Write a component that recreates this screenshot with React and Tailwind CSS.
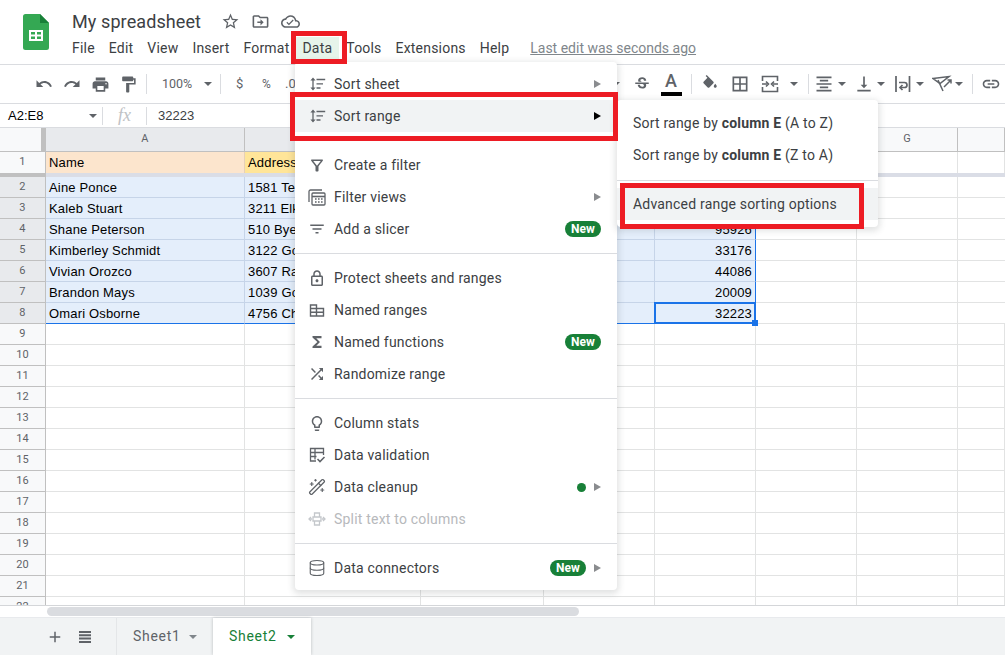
import { Database, WandSparkles } from 'lucide-react'

const ROBOTO = "font-['Roboto',sans-serif]"
const ARIAL = "font-['Liberation_Sans',Arial,sans-serif]"

function Mi({ d, size = 18, className = 'text-[#5f6368]' }) {
  return (
    <svg width={size} height={size} viewBox="0 0 24 24" fill="currentColor" className={className}>
      <path d={d} />
    </svg>
  )
}

function Caret({ className = 'text-[#5f6368]' }) {
  return (
    <svg width="8" height="4" viewBox="0 0 8 4" fill="currentColor" className={className}>
      <polygon points="0,0 8,0 4,4" />
    </svg>
  )
}

function Arrow({ dark }) {
  return (
    <svg width="7" height="8" viewBox="0 0 7 8" fill="currentColor" className={dark ? 'text-black' : 'text-[#8a8c8f]'}>
      <polygon points="0,0 7,4 0,8" />
    </svg>
  )
}

function SortIcon() {
  return (
    <svg width="18" height="18" viewBox="0 0 18 18" fill="none" stroke="#5f6368" strokeWidth="1.3">
      <path d="M5 4v10" />
      <path d="M2.4 5.500 5 2.500l2.600 3zM2.400 12.500 5 15.500l2.600-3z" fill="#5f6368" stroke="none" />
      <path d="M8.500 4.500h8.700M8.500 8.800h6.500M8.500 13h4" />
    </svg>
  )
}

function FilterViewsIcon() {
  return (
    <svg width="18" height="18" viewBox="0 0 18 18" fill="none" stroke="#5f6368" strokeWidth="1.3">
      <path d="M1 14V3.5C1 2.7 1.7 2 2.5 2H14" />
      <rect x="4" y="5" width="13" height="12" rx="1" />
      <path d="M4 8.5h13" strokeWidth="1.6" />
      <path d="M7 11h1.6M10 11h1.6M13 11h1.6M7 14h1.6M10 14h1.6M13 14h1.6" strokeWidth="1.6" />
    </svg>
  )
}

function NamedRangesIcon() {
  return (
    <svg width="18" height="18" viewBox="0 0 18 18" fill="none" stroke="#5f6368" strokeWidth="1.4">
      <path d="M2.5 15V4h6v3.5h7V15z" />
      <path d="M2.5 7.5h6M2.5 11.2h13M8.5 7.5V15" />
    </svg>
  )
}

function ValidationIcon() {
  return (
    <svg width="18" height="18" viewBox="0 0 18 18" fill="none" stroke="#5f6368" strokeWidth="1.3">
      <path d="M8 15H2.5V2.5h13V9" />
      <path d="M2.5 6.5h13M2.5 10.5h6M7 2.5v11" />
      <path d="m9.5 13 2.5 2.6 4.5-4.6" strokeWidth="1.5" />
    </svg>
  )
}

function SplitIcon() {
  return (
    <svg width="18" height="18" viewBox="0 0 18 18" fill="none" stroke="#c4c7cb" strokeWidth="1.3">
      <path d="M6.5 3h5v4h-5zM6.5 11h5v4h-5zM5 7h8v4H5z" />
      <path d="M1 9h3M14 9h3" />
      <path d="M3 7 1 9l2 2M15 7l2 2-2 2" />
    </svg>
  )
}

function MergeIcon() {
  return (
    <svg width="18" height="18" viewBox="0 0 18 18" fill="none" stroke="#5f6368" strokeWidth="1.6">
      <path d="M1.5 6V1.5h15V6M1.5 12v4.500h15V12" />
      <path d="M1 9h5.500M11.500 9H17" />
      <path d="m5 6.500 2.500 2.500L5 11.500M13 6.500 10.500 9l2.500 2.500" />
    </svg>
  )
}

function WrapIcon() {
  return (
    <svg width="18" height="18" viewBox="0 0 18 18" fill="none" stroke="#5f6368" strokeWidth="1.7">
      <path d="M2 1v16M15.500 1v16" />
      <path d="M5 7.500h5.500a2.500 2.500 0 0 1 0 5H7" />
      <path d="M8.500 10 6 12.500 8.500 15" />
    </svg>
  )
}

function RotateIcon() {
  return (
    <svg width="20" height="18" viewBox="0 0 20 18" fill="none" stroke="#5f6368" strokeWidth="1.5">
      <path d="M1 3.500 17 1.500 8 8.500z" />
      <path d="m6 5 5 11" />
      <path d="M12 12 19 5M15.500 5H19v3.500" />
    </svg>
  )
}

const P = {
  undo: 'M12.5 8c-2.65 0-5.05.99-6.9 2.6L2 7v9h9l-3.62-3.62c1.39-1.16 3.16-1.88 5.12-1.88 3.54 0 6.55 2.31 7.6 5.5l2.37-.78C21.08 11.03 17.15 8 12.5 8z',
  redo: 'M18.4 10.6C16.55 8.99 14.15 8 11.5 8c-4.65 0-8.58 3.03-9.96 7.22L3.9 16c1.05-3.19 4.05-5.5 7.6-5.5 1.95 0 3.73.72 5.12 1.88L13 16h9V7l-3.6 3.6z',
  print: 'M19 8H5c-1.66 0-3 1.34-3 3v6h4v4h12v-4h4v-6c0-1.66-1.34-3-3-3zm-3 11H8v-5h8v5zm3-7c-.55 0-1-.45-1-1s.45-1 1-1 1 .45 1 1-.45 1-1 1zm-1-9H6v4h12V3z',
  paint: 'M18 4V3c0-.55-.45-1-1-1H5c-.55 0-1 .45-1 1v4c0 .55.45 1 1 1h12c.55 0 1-.45 1-1V6h1v4H9v11c0 .55.45 1 1 1h2c.55 0 1-.45 1-1v-9h8V4h-3z',
  star: 'M22 9.24l-7.19-.62L12 2 9.19 8.63 2 9.24l5.46 4.73L5.82 21 12 17.27 18.18 21l-1.63-7.03L22 9.24zM12 15.4l-3.76 2.27 1-4.28-3.32-2.88 4.38-.38L12 6.1l1.71 4.04 4.38.38-3.32 2.88 1 4.28L12 15.4z',
  move: 'M20 6h-8l-2-2H4c-1.1 0-2 .9-2 2v12c0 1.1.9 2 2 2h16c1.1 0 2-.9 2-2V8c0-1.1-.9-2-2-2zm0 12H4V6h5.17l2 2H20v10zm-8-4H8v-2h4V9l4 4-4 4v-3z',
  cloud: 'M19.35 10.04C18.67 6.59 15.64 4 12 4 9.11 4 6.6 5.64 5.35 8.04 2.34 8.36 0 10.91 0 14c0 3.31 2.69 6 6 6h13c2.76 0 5-2.24 5-5 0-2.64-2.05-4.78-4.65-4.96zM19 18H6c-2.21 0-4-1.79-4-4 0-2.05 1.53-3.76 3.56-3.97l1.07-.11.5-.95C8.08 7.14 9.94 6 12 6c2.62 0 4.88 1.86 5.39 4.43l.3 1.5 1.53.11c1.56.1 2.78 1.41 2.78 2.96 0 1.65-1.35 3-3 3zm-9-3.500-2.100-2.100-1.100 1.100 3.200 3.200 6-6-1.100-1.100z',
  strike: 'M6.85 7.08C6.85 4.37 9.45 3 12.24 3c1.64 0 3 .49 3.9 1.28.77.65 1.46 1.73 1.46 3.24h-3.01c0-.31-.05-.59-.15-.85-.29-.86-1.2-1.28-2.25-1.28-1.86 0-2.34 1.02-2.34 1.7 0 .48.25.88.74 1.21.38.25.77.48 1.41.7H7.39c-.21-.34-.54-.89-.54-1.92zM21 12v-2H3v2h9.62c1.15.45 1.96.75 1.96 1.97 0 1-.81 1.67-2.28 1.67-1.54 0-2.93-.54-2.93-2.51H6.4c0 .55.08 1.13.24 1.58.81 2.29 3.29 3.3 5.67 3.3 2.27 0 5.3-.89 5.3-4.05 0-.3-.01-1.16-.48-1.94H21V12z',
  fill: 'M16.56 8.94 7.62 0 6.21 1.41l2.38 2.38-5.15 5.15c-.59.59-.59 1.54 0 2.12l5.5 5.5c.29.29.68.44 1.06.44s.77-.15 1.06-.44l5.5-5.5c.59-.58.59-1.53 0-2.12zM19 11.5s-2 2.17-2 3.5c0 1.1.9 2 2 2s2-.9 2-2c0-1.33-2-3.5-2-3.5z',
  border: 'M3 3v18h18V3H3zm8 16H5v-6h6v6zm0-8H5V5h6v6zm8 8h-6v-6h6v6zm0-8h-6V5h6v6z',
  align: 'M3 21h18v-2H3v2zm4-4h10v-2H7v2zm-4-4h18v-2H3v2zm4-4h10V7H7v2zM3 3v2h18V3H3z',
  valign: 'M16 13h-3V3h-2v10H8l4 4 4-4zM4 19v2h16v-2H4z',
  link: 'M3.9 12c0-1.71 1.39-3.1 3.1-3.1h4V7H7c-2.76 0-5 2.24-5 5s2.24 5 5 5h4v-1.9H7c-1.71 0-3.1-1.39-3.1-3.1zM8 13h8v-2H8v2zm9-6h-4v1.9h4c1.71 0 3.1 1.39 3.1 3.1s-1.39 3.1-3.1 3.1h-4V17h4c2.76 0 5-2.24 5-5s-2.24-5-5-5z',
  funnel: 'M7 6h10l-5.01 6.3L7 6zm-2.75-.39C6.27 8.2 10 13 10 13v6c0 .55.45 1 1 1h2c.55 0 1-.45 1-1v-6s3.72-4.800 5.740-7.390c.51-.66.04-1.610-.79-1.610H5.040c-.83 0-1.300.950-.790 1.610z',
  slicer: 'M10 18h4v-2h-4v2zM3 6v2h18V6H3zm3 7h12v-2H6v2z',
  lock: 'M18 8h-1V6c0-2.76-2.24-5-5-5S7 3.24 7 6v2H6c-1.1 0-2 .9-2 2v10c0 1.1.9 2 2 2h12c1.1 0 2-.9 2-2V10c0-1.1-.9-2-2-2zM9 6c0-1.66 1.34-3 3-3s3 1.34 3 3v2H9V6zm9 14H6V10h12v10zm-6-3c1.1 0 2-.9 2-2s-.9-2-2-2-2 .9-2 2 .9 2 2 2z',
  sigma: 'M18 4H6v2l6.5 6L6 18v2h12v-3h-7l5-5-5-5h7z',
  shuffle: 'M10.59 9.17 5.41 4 4 5.41l5.17 5.17 1.42-1.41zM14.5 4l2.04 2.04L4 18.59 5.41 20 17.96 7.46 20 9.5V4h-5.5zm.33 9.41-1.41 1.41 3.13 3.13L14.5 20H20v-5.5l-2.04 2.04-3.13-3.13z',
  bulb: 'M9 21c0 .55.45 1 1 1h4c.55 0 1-.45 1-1v-1H9v1zm3-19C8.14 2 5 5.14 5 9c0 2.38 1.19 4.47 3 5.74V17c0 .55.45 1 1 1h6c.55 0 1-.45 1-1v-2.26c1.81-1.27 3-3.36 3-5.74 0-3.86-3.14-7-7-7zm2.85 11.1-.85.6V16h-4v-2.3l-.85-.6C7.8 12.16 7 10.63 7 9c0-2.76 2.24-5 5-5s5 2.24 5 5c0 1.63-.8 3.16-2.15 4.1z',
}

function Logo() {
  return (
    <svg width="26" height="36" viewBox="0 0 26 36">
      <path d="M2.500 0H17l9 9v24.500a2.500 2.500 0 0 1-2.500 2.500h-21A2.500 2.500 0 0 1 0 33.500v-31A2.500 2.500 0 0 1 2.500 0z" fill="#34a853" />
      <path d="M17 0l9 9h-9z" fill="#188038" />
      <path d="M6 16h14v11H6z" fill="#fff" />
      <path d="M8 18h4v2.500H8zM14 18h4v2.500h-4zM8 22.500h4V25H8zM14 22.500h4V25h-4z" fill="#34a853" />
    </svg>
  )
}

function Sep() {
  return <div className="w-px h-5 bg-[#dadce0] shrink-0" />
}

const MENUS = ['File', 'Edit', 'View', 'Insert', 'Format', 'Data', 'Tools', 'Extensions', 'Help']

function Header() {
  return (
    <div className={`h-[65px] shrink-0 flex border-b border-[#dadce0] ${ROBOTO}`}>
      <div className="w-[65px] pl-[23px] pt-[14px] shrink-0">
        <Logo />
      </div>
      <div className="flex flex-col">
        <div className="flex items-center h-[24px] mt-[9px] pl-[7px]">
          <span className="text-[18px] text-[#3c4043] w-[149px] tracking-[0.1px]">My spreadsheet</span>
          <div className="flex items-center gap-[11px]">
            <Mi d={P.star} size={19} />
            <Mi d={P.move} size={19} />
            <Mi d={P.cloud} size={19} />
          </div>
        </div>
        <div className="flex items-center h-[22px] mt-[4px] text-[14px] tracking-[0.2px] text-[#3c4043]">
          {MENUS.map((m) => (
            <span key={m} className={m === 'Data' ? '-ml-px px-[7px] bg-[#e6f4ea] h-[22px] flex items-center' : 'px-[7px]'}>
              {m}
            </span>
          ))}
          <span className="ml-[14px] text-[#80868b] underline tracking-normal">Last edit was seconds ago</span>
        </div>
      </div>
    </div>
  )
}

function Tool({ children, className = 'w-7' }) {
  return <div className={`h-full flex items-center justify-center shrink-0 ${className}`}>{children}</div>
}

function Toolbar() {
  return (
    <div className={`h-[39px] shrink-0 flex items-center border-b border-[#dadce0] text-[#5f6368] ${ROBOTO}`}>
      <div className="w-[30px] shrink-0" />
      <Tool><Mi d={P.undo} /></Tool>
      <Tool><Mi d={P.redo} /></Tool>
      <Tool><Mi d={P.print} size={19} /></Tool>
      <Tool><Mi d={P.paint} size={19} /></Tool>
      <div className="w-1 shrink-0" />
      <Sep />
      <span className="ml-[15px] w-[42px] text-[12.500px] shrink-0">100%</span>
      <Caret />
      <div className="ml-[8px]"><Sep /></div>
      <span className="ml-[15px] w-[26px] text-[13px] shrink-0">$</span>
      <span className="w-[23px] text-[12px] shrink-0">%</span>
      <span className="text-[13px] shrink-0">.0</span>
      <div className="ml-auto h-full flex items-center pl-1 w-[399px] shrink-0">
        <Tool className="w-[18px] justify-start pl-[2px]"><Caret /></Tool>
        <Tool><Mi d={P.strike} /></Tool>
        <div className="w-[30px] h-full shrink-0 flex flex-col items-center pt-[6px]">
          <span className="text-[18px] leading-[20px] font-medium text-[#5f6368]">A</span>
          <div className="w-[21px] h-[4px] bg-black mt-px" />
        </div>
        <div className="ml-[5px]"><Sep /></div>
        <Tool className="w-9"><Mi d={P.fill} /></Tool>
        <Tool className="w-6"><Mi d={P.border} size={20} /></Tool>
        <Tool className="w-9"><MergeIcon /></Tool>
        <Tool className="w-3"><Caret /></Tool>
        <div className="ml-2"><Sep /></div>
        <Tool className="w-6 ml-[3px]"><Mi d={P.align} size={20} /></Tool>
        <Tool className="w-2.5 ml-px"><Caret /></Tool>
        <Tool className="w-6 ml-[5px]"><Mi d={P.valign} size={20} /></Tool>
        <Tool className="w-2.5"><Caret /></Tool>
        <Tool className="w-6 ml-[5px]"><WrapIcon /></Tool>
        <Tool className="w-2.5"><Caret /></Tool>
        <Tool className="w-6 ml-[5px]"><RotateIcon /></Tool>
        <Tool className="w-2.5"><Caret /></Tool>
        <div className="ml-2"><Sep /></div>
        <Tool className="w-6 ml-1.5"><Mi d={P.link} size={20} /></Tool>
      </div>
    </div>
  )
}

function FormulaBar() {
  return (
    <div className={`h-6 shrink-0 flex items-center border-b border-[#dadce0] text-[13px] text-black ${ARIAL}`}>
      <span className="pl-2 w-[89px] shrink-0">A2:E8</span>
      <Caret />
      <div className="ml-[5px] w-px h-[18px] bg-[#dadce0]" />
      <span className="w-[43px] text-center text-[18px] italic text-[#c0c2c5] font-['Liberation_Serif',serif]">fx</span>
      <div className="w-px h-[18px] bg-[#dadce0]" />
      <span className="pl-[11px] text-[#3c4043]">32223</span>
    </div>
  )
}

const COLS = ['A', 'B', 'C', 'D', 'E', 'F', 'G', '']

const ROWS = [
  ['Aine Ponce', '1581 Terry Lane', '', '', '61093'],
  ['Kaleb Stuart', '3211 Elk Street', '', '', '27410'],
  ['Shane Peterson', '510 Byers Lane', '', '', '95926'],
  ['Kimberley Schmidt', '3122 Golden Ridge', '', '', '33176'],
  ['Vivian Orozco', '3607 Raccoon Run', '', '', '44086'],
  ['Brandon Mays', '1039 Godfrey Road', '', '', '20009'],
  ['Omari Osborne', '4756 Charter Street', '', '', '32223'],
]

const GRID_COLS = 'grid grid-cols-[46px_199px_176px_123px_111px_101px_101px_101px_1fr]'

function Sheet() {
  const emptyRows = []
  for (let r = 9; r <= 22; r++) emptyRows.push(r)
  return (
    <div className={`flex-1 min-h-0 overflow-hidden border-b border-[#d4d6d9] ${ARIAL}`}>
      <div className={`${GRID_COLS} grid-rows-[24px_21px_4px] text-[13px] tracking-[0.17px] text-black`}>
        {/* column headers */}
        <div className="bg-[#f8f9fa] border-r-[5px] border-r-[#c0c0c0] border-b border-b-[#c0c0c0]" />
        {COLS.map((c, i) => (
          <div
            key={i}
            className={`flex items-center justify-center text-[11px] text-[#5f6368] border-r border-b border-[#c0c0c0] ${ROBOTO} ${i < 5 ? 'bg-[#e8eaed]' : 'bg-[#f8f9fa]'}`}
          >
            {c}
          </div>
        ))}

        {/* frozen row */}
        <div className={`flex items-center justify-center text-[11px] text-[#5f6368] bg-[#f8f9fa] border-r border-[#c0c0c0] ${ROBOTO}`}>1</div>
        <div className="pl-[3px] flex items-center bg-[#fce5cd] border-r border-[#e6d0b8]">Name</div>
        <div className="pl-[3px] flex items-center bg-[#ffe599] border-r border-[#e6d08c] overflow-hidden">Address</div>
        {[3, 4, 5, 6, 7, 8].map((k) => (
          <div key={k} className="border-r border-[#e2e3e3]" />
        ))}

        <div className="bg-[#c0c0c0]" />
        <div className="col-span-8 bg-[#dadde6]" />
      </div>

      <div className={`${GRID_COLS} auto-rows-[21px] text-[13px] tracking-[0.17px] text-black`}>
        {ROWS.map((row, r) => (
          <SelectedRow key={r} n={r + 2} row={row} last={r === ROWS.length - 1} />
        ))}
        {emptyRows.map((n) => (
          <EmptyRow key={n} n={n} />
        ))}
      </div>
    </div>
  )
}

function SelectedRow({ n, row, last }) {
  const bottom = last ? 'border-b-[#1a73e8]' : 'border-b-[#c6d4e8]'
  return (
    <>
      <div className={`flex items-center justify-center text-[11px] text-[#5f6368] bg-[#e8eaed] border-r border-b border-[#c0c0c0] ${ROBOTO}`}>{n}</div>
      {row.map((v, i) => (
        <div
          key={i}
          className={`relative bg-[#e4eefb] pt-[2px] border-b border-r whitespace-nowrap overflow-visible flex items-center ${bottom} ${i === 4 ? 'border-r-[#1a73e8] justify-end pr-[3px]' : 'border-r-[#c6d4e8] pl-[3px]'}`}
        >
          {v}
          {last && i === 4 && (
            <>
              <div className="absolute -left-px -top-px -right-px -bottom-px border-2 border-[#1a73e8]" />
              <div className="absolute -right-[3px] -bottom-[3px] w-[6px] h-[6px] bg-[#1a73e8]" />
            </>
          )}
        </div>
      ))}
      {[6, 7].map((k) => (
        <div key={k} className="border-r border-b border-[#e2e3e3]" />
      ))}
      <div className="border-b border-[#e2e3e3]" />
    </>
  )
}

function EmptyRow({ n }) {
  return (
    <>
      <div className={`flex items-center justify-center text-[11px] text-[#5f6368] bg-[#f8f9fa] border-r border-b border-[#c0c0c0] ${ROBOTO}`}>{n}</div>
      {[1, 2, 3, 4, 5, 6, 7, 8].map((k) => (
        <div key={k} className="border-r border-b border-[#e2e3e3]" />
      ))}
    </>
  )
}

function Scrollbar() {
  return (
    <div className="h-[12px] shrink-0 pl-[47px] pt-px border-b border-[#e8eaed]">
      <div className="w-[532px] h-[9px] rounded-[5px] bg-[#dadce0]" />
    </div>
  )
}

function Tabs() {
  return (
    <div className={`flex-1 flex bg-[#f1f3f4] text-[14px] tracking-[0.7px] ${ROBOTO}`}>
      <div className="w-[117px] shrink-0 flex items-center pl-[46px] gap-[14px] border-r border-[#e4e6e8]">
        <Mi d="M19 13h-6v6h-2v-6H5v-2h6V5h2v6h6v2z" size={18} />
        <svg width="14" height="12" viewBox="0 0 14 12" fill="#5f6368">
          <path d="M1 0h12v2H1zM1 3.300h12v2H1zM1 6.600h12v2H1zM1 10h12v2H1z" />
        </svg>
      </div>
      <div className="w-[96px] shrink-0 flex items-center pl-[16px] text-[#5f6368]">
        Sheet1
        <span className="ml-[8px]"><Caret className="text-[#80868b]" /></span>
      </div>
      <div className="w-[98px] shrink-0 flex items-center pl-[16px] bg-white text-[#188038] shadow-[0_0_3px_rgba(60,64,67,0.3)]">
        Sheet2
        <span className="ml-[10px]"><Caret className="text-[#188038]" /></span>
      </div>
    </div>
  )
}

function Badge() {
  return (
    <span className="w-9 h-4 rounded-full bg-[#188038] text-white text-[12px] font-bold flex items-center justify-center tracking-normal">New</span>
  )
}

function Item({ icon, label, right, hover, disabled }) {
  return (
    <div className={`h-8 flex items-center pl-[13px] pr-4 ${hover ? 'bg-[#f1f3f4]' : ''} ${disabled ? 'text-[#b7b9bc]' : ''}`}>
      <div className="w-[18px] flex justify-center shrink-0">{icon}</div>
      <span className="ml-2">{label}</span>
      <div className="ml-auto flex items-center gap-2">{right}</div>
    </div>
  )
}

function Divider() {
  return <div className="my-2 h-px bg-[#dadce0]" />
}

function DataMenu() {
  return (
    <div className={`absolute left-[295px] top-[62px] w-[322px] py-[6px] bg-white rounded-[4px] shadow-[0_2px_6px_2px_rgba(60,64,67,0.15)] text-[14px] tracking-[0.2px] text-[#3c4043] ${ROBOTO}`}>
      <Item icon={<SortIcon />} label="Sort sheet" right={<Arrow />} />
      <Item icon={<SortIcon />} label="Sort range" right={<Arrow dark />} hover />
      <Divider />
      <Item icon={<Mi d={P.funnel} size={19} />} label="Create a filter" />
      <Item icon={<FilterViewsIcon />} label="Filter views" right={<Arrow />} />
      <Item icon={<Mi d={P.slicer} size={20} />} label="Add a slicer" right={<Badge />} />
      <Divider />
      <Item icon={<Mi d={P.lock} size={19} />} label="Protect sheets and ranges" />
      <Item icon={<NamedRangesIcon />} label="Named ranges" />
      <Item icon={<Mi d={P.sigma} size={18} />} label="Named functions" right={<Badge />} />
      <Item icon={<Mi d={P.shuffle} size={22} />} label="Randomize range" />
      <Divider />
      <Item icon={<Mi d={P.bulb} size={19} />} label="Column stats" />
      <Item icon={<ValidationIcon />} label="Data validation" />
      <Item
        icon={<WandSparkles size={18} strokeWidth={1.6} className="text-[#5f6368]" />}
        label="Data cleanup"
        right={<><span className="w-[9px] h-[9px] rounded-full bg-[#188038]" /><Arrow /></>}
      />
      <Item icon={<SplitIcon />} label="Split text to columns" disabled />
      <Divider />
      <Item
        icon={<Database size={18} strokeWidth={1.5} className="text-[#5f6368]" />}
        label="Data connectors"
        right={<><Badge /><Arrow /></>}
      />
    </div>
  )
}

function SortSubmenu() {
  return (
    <div className={`absolute left-[617px] top-[100px] w-[261px] py-[7px] bg-white rounded-[4px] shadow-[0_2px_6px_2px_rgba(60,64,67,0.15)] text-[14px] tracking-[0.2px] text-[#3c4043] ${ROBOTO}`}>
      <div className="h-8 flex items-center pl-4 whitespace-pre">
        Sort range by <b className="font-bold">column E</b> (A to Z)
      </div>
      <div className="h-8 flex items-center pl-4 whitespace-pre">
        Sort range by <b className="font-bold">column E</b> (Z to A)
      </div>
      <div className="mt-[9px] mb-2 h-px bg-[#dadce0]" />
      <div className="h-8 -mt-px flex items-center pl-4 bg-[#f1f3f4]">Advanced range sorting options</div>
    </div>
  )
}

export default function App() {
  return (
    <div className="relative w-[1005px] h-[655px] overflow-hidden bg-white flex flex-col">
      <Header />
      <Toolbar />
      <FormulaBar />
      <div className="h-[478px] shrink-0 flex flex-col">
        <Sheet />
      </div>
      <Scrollbar />
      <Tabs />

      <DataMenu />
      <SortSubmenu />

      {/* red annotation boxes drawn over the screenshot */}
      <div className="absolute left-[291px] top-[31px] w-[56px] h-[33px] border-[5px] border-[#ed1c24]" />
      <div className="absolute left-[290px] top-[92px] w-[328px] h-[49px] border-[5px] border-[#ed1c24]" />
      <div className="absolute left-[620px] top-[183px] w-[244px] h-[46px] border-[5px] border-[#ed1c24]" />
    </div>
  )
}
